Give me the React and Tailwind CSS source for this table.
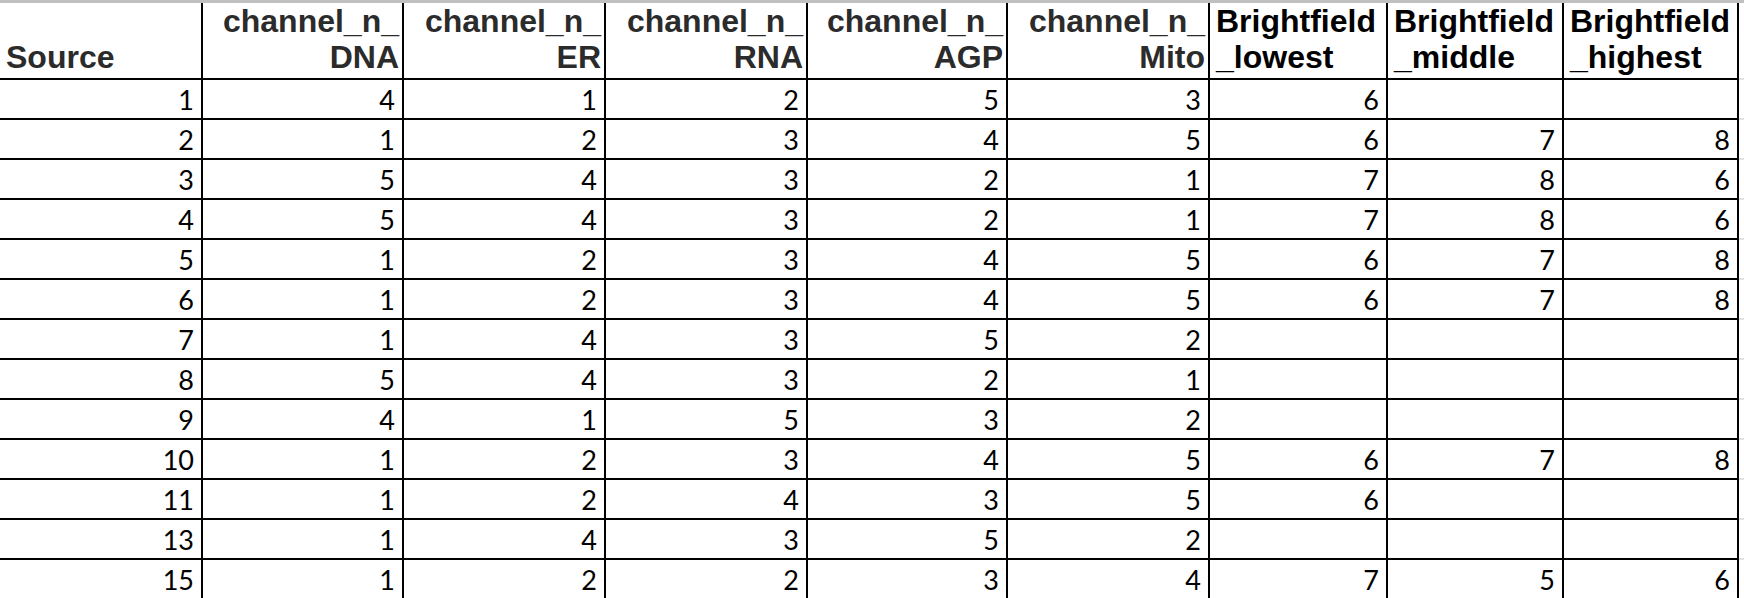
import React from "react";

const headers = [
  { l1: "", l2: "Source", align: "left", color: "text-[#2b2b2b]" },
  { l1: "channel_n_", l2: "DNA", align: "right", color: "text-[#2b2b2b]" },
  { l1: "channel_n_", l2: "ER", align: "right", color: "text-[#2b2b2b]" },
  { l1: "channel_n_", l2: "RNA", align: "right", color: "text-[#2b2b2b]" },
  { l1: "channel_n_", l2: "AGP", align: "right", color: "text-[#2b2b2b]" },
  { l1: "channel_n_", l2: "Mito", align: "right", color: "text-[#2b2b2b]" },
  { l1: "Brightfield", l2: "_lowest", align: "left", color: "text-black" },
  { l1: "Brightfield", l2: "_middle", align: "left", color: "text-black" },
  { l1: "Brightfield", l2: "_highest", align: "left", color: "text-black" },
];

const widths = [202, 201, 202, 202, 200, 202, 178, 176, 175];

const rows = [
  [1, 4, 1, 2, 5, 3, 6, "", ""],
  [2, 1, 2, 3, 4, 5, 6, 7, 8],
  [3, 5, 4, 3, 2, 1, 7, 8, 6],
  [4, 5, 4, 3, 2, 1, 7, 8, 6],
  [5, 1, 2, 3, 4, 5, 6, 7, 8],
  [6, 1, 2, 3, 4, 5, 6, 7, 8],
  [7, 1, 4, 3, 5, 2, "", "", ""],
  [8, 5, 4, 3, 2, 1, "", "", ""],
  [9, 4, 1, 5, 3, 2, "", "", ""],
  [10, 1, 2, 3, 4, 5, 6, 7, 8],
  [11, 1, 2, 4, 3, 5, 6, "", ""],
  [13, 1, 4, 3, 5, 2, "", "", ""],
  [15, 1, 2, 2, 3, 4, 7, 5, 6],
];

export default function App() {
  return (
    <div className="w-[1744px] h-[598px] overflow-hidden bg-white">
      <div className="h-[3px] bg-[#c0c0c0]" />
      <table className="table-fixed border-collapse" style={{ width: 1744 }}>
        <colgroup>
          {widths.map((w, i) => (
            <col key={i} style={{ width: w }} />
          ))}
          <col />
        </colgroup>
        <thead>
          <tr className="h-[75px]">
            {headers.map((h, i) => (
              <th
                key={i}
                className={`align-bottom font-bold text-[32px] leading-[36px] pb-[3px] whitespace-nowrap overflow-visible border-b-2 border-black ${
                  i === 0 ? "" : "border-l-2"
                } ${i === 8 ? "border-r-2" : ""} ${
                  h.align === "left" ? "text-left pl-[6px] pr-[2px]" : "text-right pr-[3px] pl-[2px]"
                } ${h.color}`}
                style={{ fontFamily: '"Liberation Sans", Arial, sans-serif' }}
              >
                {h.l1 && <div>{h.l1}</div>}
                <div>{h.l2}</div>
              </th>
            ))}
            <th className="border-b-2 border-[#e2e2e2]" />
          </tr>
        </thead>
        <tbody>
          {rows.map((r, ri) => (
            <tr key={ri} className="h-[40px]">
              {r.map((v, ci) => (
                <td
                  key={ci}
                  className={`text-right align-bottom text-[27px] leading-[36px] pr-[7px] text-black border-b-2 border-black ${
                    ci === 0 ? "" : "border-l-2"
                  } ${ci === 8 ? "border-r-2" : ""}`}
                  style={{ fontFamily: 'Lato, "Open Sans", sans-serif' }}
                >
                  {v}
                </td>
              ))}
              <td className="border-b-2 border-[#e2e2e2]" />
            </tr>
          ))}
        </tbody>
      </table>
    </div>
  );
}
